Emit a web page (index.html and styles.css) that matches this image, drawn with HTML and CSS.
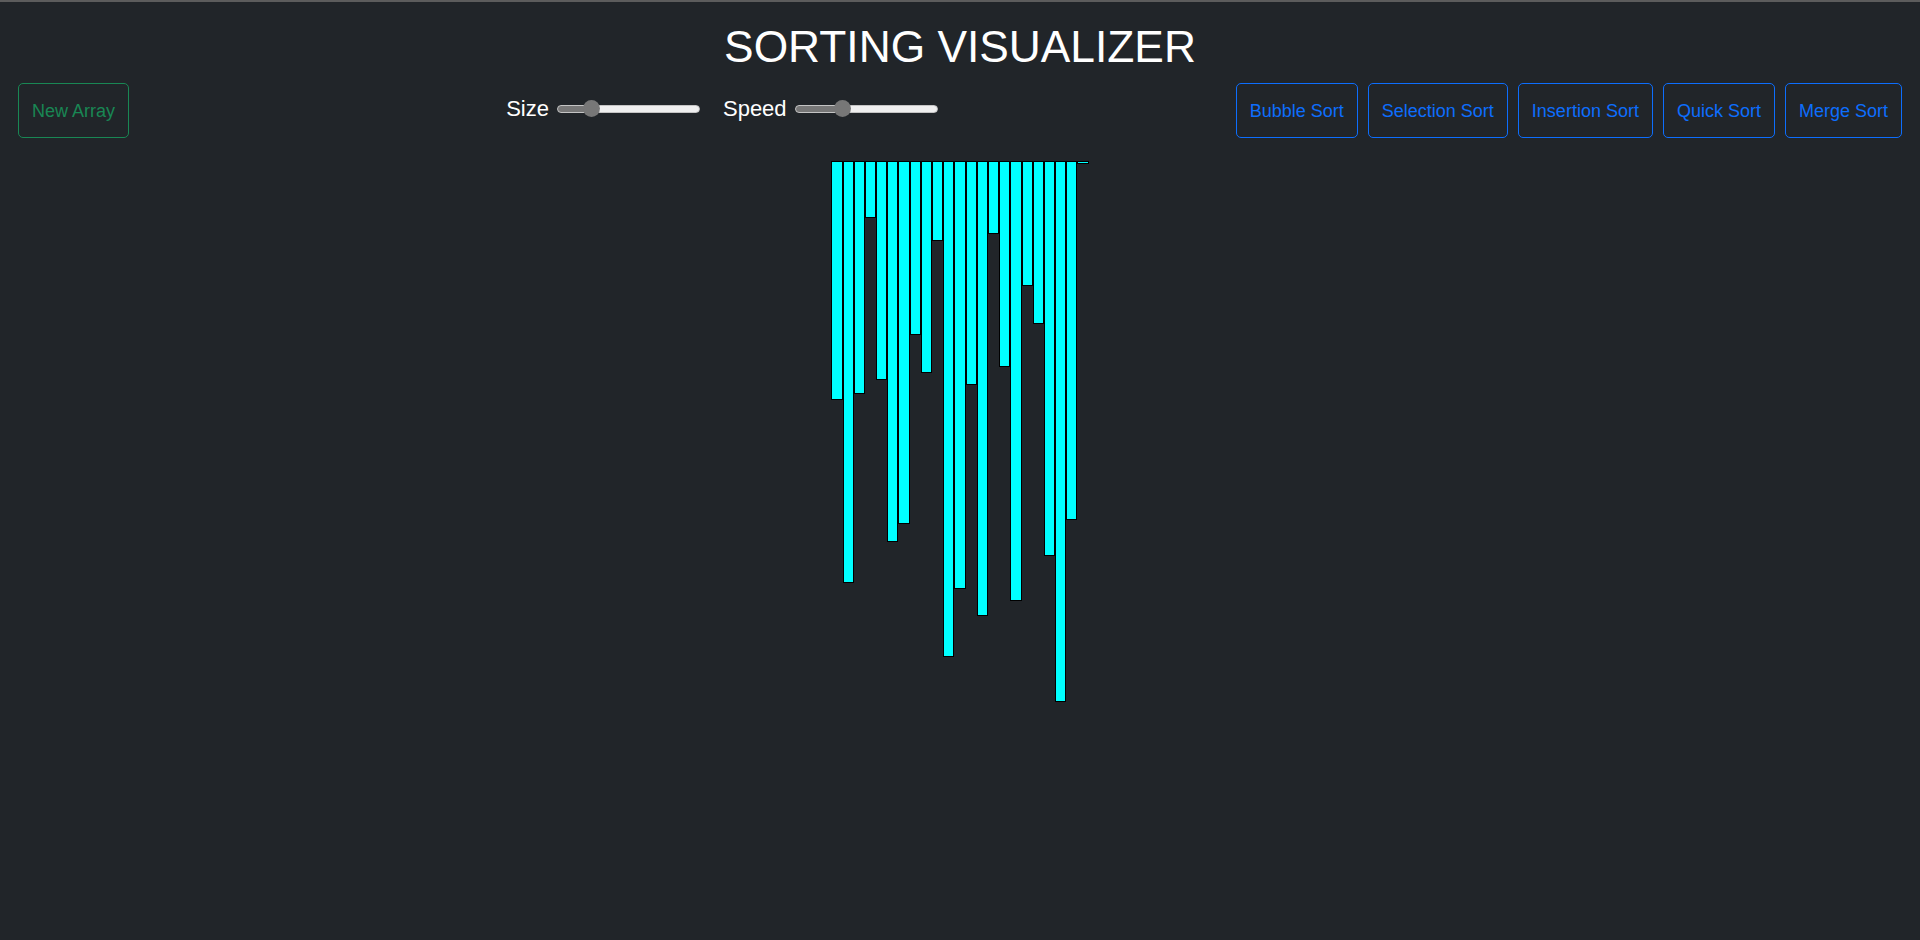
FILE: index.html
```html
<!DOCTYPE html>
<html lang="en">
<head>
  <meta charset="UTF-8" />
  <meta name="viewport" content="width=device-width, initial-scale=1.0"/>
  <title>Sorting Visualizer</title>
  <link rel="stylesheet" href="styles.css">
</head>
<body>
  <h1 class="title">SORTING VISUALIZER</h1>

  <!-- Controls -->
  <div class="toolbar">
    <button class="btn btn-green" onclick="newArray()">New Array</button>

    <div class="sliders">
      <label class="slider-label" for="sizeRange">Size</label>
      <input type="range" id="sizeRange" class="range" min="0" max="100" value="20" style="--fill: 23%">
      <label class="slider-label speed-label" for="speedRange">Speed</label>
      <input type="range" id="speedRange" class="range" min="0" max="100" value="31" style="--fill: 33%">
    </div>

    <div class="sort-buttons">
      <button class="btn btn-blue">Bubble Sort</button>
      <button class="btn btn-blue">Selection Sort</button>
      <button class="btn btn-blue">Insertion Sort</button>
      <button class="btn btn-blue">Quick Sort</button>
      <button class="btn btn-blue">Merge Sort</button>
    </div>
  </div>

  <!-- Bars -->
  <div class="bars" id="bars"></div>

  <script>
    const heights = [239, 422, 233, 57, 219, 381, 363, 174, 212, 80, 496, 428,
                     224, 455, 73, 206, 440, 125, 163, 395, 541, 359, 3];

    function render(arr) {
      const container = document.getElementById('bars');
      container.innerHTML = '';
      arr.forEach(h => {
        const bar = document.createElement('div');
        bar.className = 'bar';
        bar.style.height = h + 'px';
        container.appendChild(bar);
      });
    }

    function newArray() {
      render(heights.map(() => Math.floor(Math.random() * 540) + 3));
    }

    render(heights);
  </script>
</body>
</html>
```

FILE: styles.css
```css
body {
  margin: 0;
  min-height: 100vh;
  border-top: 2px solid #5c5c5c;
  box-sizing: border-box;
  background-color: #212529;
  color: #fff;
  font-family: 'Liberation Sans', Arial, sans-serif;
}

.title {
  margin: 20px 0 0;
  text-align: center;
  font-size: 44.3px;
  font-weight: normal;
  line-height: normal;
  color: #fff;
}

.toolbar {
  display: flex;
  justify-content: space-between;
  align-items: center;
  padding: 0 18px;
  margin-top: 11px;
}

.btn {
  padding: 14px 13px 11px;
  border: 1px solid;
  border-radius: 5px;
  background: transparent;
  font-family: 'Liberation Sans', Arial, sans-serif;
  font-size: 18px;
  line-height: 27.5px;
  cursor: pointer;
}

.btn-green { color: #198754; border-color: #198754; }
.btn-blue { color: #0d6efd; border-color: #0d6efd; }

.btn-green:hover { background-color: #198754; color: #fff; }
.btn-blue:hover { background-color: #0d6efd; color: #fff; }

.sort-buttons {
  display: flex;
  gap: 10px;
}

.sliders {
  display: flex;
  align-items: center;
  padding-left: 79px;
  padding-bottom: 3px;
}

.slider-label {
  font-size: 22px;
  margin-right: 8px;
}

.speed-label { margin-left: 23px; }

.range {
  -webkit-appearance: none;
  appearance: none;
  width: 143px;
  height: 8px;
  margin: 0;
  border: 1px solid #c4c4c4;
  border-radius: 4px;
  box-sizing: border-box;
  background: linear-gradient(to right, #777 var(--fill), #efefef var(--fill));
  outline: none;
}

.range::-webkit-slider-thumb {
  -webkit-appearance: none;
  width: 17px;
  height: 17px;
  border-radius: 50%;
  background: #777;
  cursor: pointer;
}

.bars {
  display: flex;
  justify-content: center;
  align-items: flex-start;
  margin-top: 23px;
}

.bar {
  width: 11.2px;
  box-sizing: border-box;
  border: 1px solid #000;
  background-color: #00ffff;
}
```
